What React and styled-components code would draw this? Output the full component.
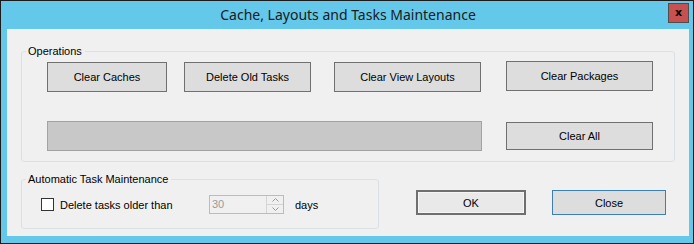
import styled, { createGlobalStyle } from 'styled-components';

const GlobalStyle = createGlobalStyle`
    html, body {
        margin: 0;
        padding: 0;
        background: #ffffff;
    }
    body {
        font-family: "Liberation Sans", Arial, sans-serif;
        font-size: 11px;
        color: #000;
    }
`;

const Window = styled.div`
    width: 694px;
    height: 244px;
    box-sizing: border-box;
    border: 1px solid #1b1b1b;
    background: #63c8ea;
    padding: 0 4px 7px 6px;
    display: flex;
    flex-direction: column;
`;

const TitleBar = styled.div`
    height: 28px;
    display: grid;
    grid-template-columns: 1fr auto 1fr;
    align-items: start;
`;

const Title = styled.div`
    grid-column: 2;
    font-family: "Noto Sans", "Open Sans", sans-serif;
    font-size: 14px;
    line-height: 27px;
    color: #1a1a1a;
`;

const CloseX = styled.div`
    grid-column: 3;
    justify-self: end;
    margin-top: 2px;
    width: 21px;
    height: 20px;
    box-sizing: border-box;
    background: #c75050;
    border: 1px solid #4e4e4e;
    display: flex;
    align-items: center;
    justify-content: center;
    font-family: "DejaVu Sans", sans-serif;
    font-weight: bold;
    font-size: 11px;
    line-height: 1;
    padding-bottom: 2px;
    color: #000;
`;

const Client = styled.div`
    flex: 1;
    background: #f0f0f0;
    padding: 22px 0 0 14px;
    box-sizing: border-box;
`;

const Group = styled.div`
    position: relative;
    box-sizing: border-box;
    width: ${p => p.$w}px;
    height: ${p => p.$h}px;
    border: 1px solid #d9e1e7;
    border-radius: 3px;
`;

const Caption = styled.span`
    position: absolute;
    top: -8px;
    left: 4px;
    padding: 0 3px 0 2px;
    background: #f0f0f0;
    line-height: 14px;
    color: #000;
`;

const OpsGrid = styled.div`
    display: grid;
    grid-template-columns: 137px 150px 172px 147px;
    grid-template-rows: 30px 30px;
    row-gap: 30px;
    padding: 9px 0 0 25px;
    align-items: start;
`;

const Button = styled.button`
    box-sizing: border-box;
    width: ${p => p.$w}px;
    height: ${p => p.$h || 30}px;
    margin-top: ${p => p.$mt || 0}px;
    background: #dddddd;
    border: 1px solid #707070;
    border-radius: 0;
    font-family: "Liberation Sans", Arial, sans-serif;
    font-size: 11px;
    color: #000;
    padding: 0;
`;

const DefaultButton = styled(Button)`
    background: #e9e9e9;
    border: 2px solid #6f6f6f;
    box-shadow: inset 0 0 0 1px #f5f5f5;
`;

const FocusButton = styled(Button)`
    border-color: #3c7fb1;
`;

const Progress = styled.div`
    grid-column: 1 / span 3;
    box-sizing: border-box;
    width: 435px;
    height: 30px;
    background: #c8c8c8;
    border: 1px solid #a3a3a3;
`;

const BottomRow = styled.div`
    display: flex;
    align-items: flex-start;
    margin-top: 17px;
`;

const AutoRow = styled.div`
    display: flex;
    align-items: center;
    padding: 15px 0 0 19px;
    height: 19px;
`;

const Check = styled.span`
    box-sizing: border-box;
    width: 13px;
    height: 13px;
    background: #fff;
    border: 1px solid #333;
`;

const Label = styled.span`
    margin-left: ${p => p.$ml || 0}px;
    width: ${p => (p.$w ? `${p.$w}px` : 'auto')};
`;

const Numeric = styled.div`
    box-sizing: border-box;
    width: 75px;
    height: 19px;
    border: 1px solid #bcbcbc;
    background: #f0f0f0;
    display: flex;
`;

const NumText = styled.span`
    flex: 1;
    color: #9a9a9a;
    padding-left: 2px;
    line-height: 17px;
`;

const Spin = styled.div`
    width: 16px;
    display: flex;
    flex-direction: column;
    border-left: 1px solid #d4d4d4;
`;

const SpinHalf = styled.div`
    flex: 1;
    display: flex;
    align-items: center;
    justify-content: center;
    border-top: ${p => (p.$sep ? '1px solid #d4d4d4' : 'none')};
`;

const Buttons = styled.div`
    display: flex;
    gap: 26px;
    margin: 11px 0 0 37px;
`;

const Chevron = ({ down }) => (
    <svg width="7" height="4" viewBox="0 0 7 4">
        <path
            d={down ? 'M0.5 0.5 L3.5 3.5 L6.5 0.5' : 'M0.5 3.5 L3.5 0.5 L6.5 3.5'}
            fill="none"
            stroke="#9a9a9a"
            strokeWidth="1"
        />
    </svg>
);

const App = () => {
    return (
        <>
            <GlobalStyle />
            <Window>
                <TitleBar>
                    <Title>Cache, Layouts and Tasks Maintenance</Title>
                    <CloseX>x</CloseX>
                </TitleBar>
                <Client>
                    <Group $w={654} $h={111}>
                        <Caption>Operations</Caption>
                        <OpsGrid>
                            <Button $w={120} $mt={1}>Clear Caches</Button>
                            <Button $w={127} $mt={1}>Delete Old Tasks</Button>
                            <Button $w={147} $mt={1}>Clear View Layouts</Button>
                            <Button $w={147}>Clear Packages</Button>
                            <Progress />
                            <Button $w={147} $h={28} $mt={1}>Clear All</Button>
                        </OpsGrid>
                    </Group>
                    <BottomRow>
                        <Group $w={358} $h={50}>
                            <Caption>Automatic Task Maintenance</Caption>
                            <AutoRow>
                                <Check />
                                <Label $ml={6} $w={149}>Delete tasks older than</Label>
                                <Numeric>
                                    <NumText>30</NumText>
                                    <Spin>
                                        <SpinHalf><Chevron /></SpinHalf>
                                        <SpinHalf $sep><Chevron down /></SpinHalf>
                                    </Spin>
                                </Numeric>
                                <Label $ml={11}>days</Label>
                            </AutoRow>
                        </Group>
                        <Buttons>
                            <DefaultButton $w={110} $h={25}>OK</DefaultButton>
                            <FocusButton $w={114} $h={25}>Close</FocusButton>
                        </Buttons>
                    </BottomRow>
                </Client>
            </Window>
        </>
    );
};

export default App;
